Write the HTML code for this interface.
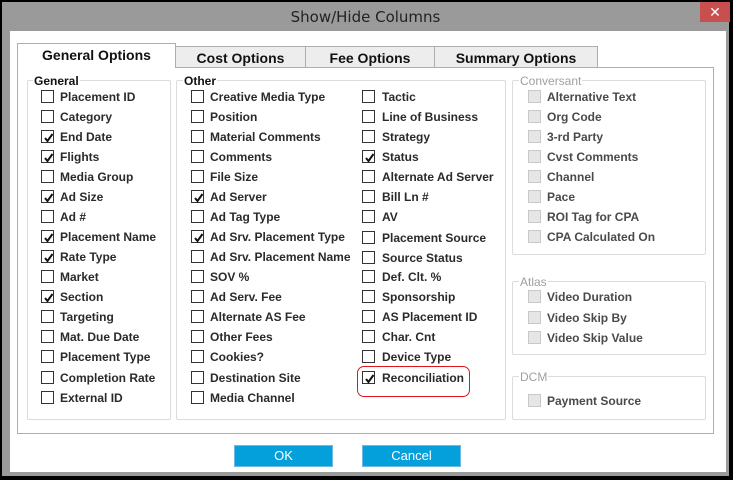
<!DOCTYPE html>
<html><head><meta charset="utf-8"><style>
*{margin:0;padding:0;box-sizing:border-box}
body{width:733px;height:480px;overflow:hidden;background:#000;font-family:"Liberation Sans",Arial,sans-serif;position:relative}
#win{position:absolute;left:2px;top:2px;width:727px;height:474px;background:#9a9a9a}
#title{position:absolute;left:0;top:0;width:727px;height:30px;text-align:center;font-size:15px;line-height:30px;color:#222;font-family:"DejaVu Sans","Liberation Sans",sans-serif}
#close{position:absolute;left:698px;top:0;width:30px;height:20px;background:#c7504f;color:#fff;text-align:center;font-size:14px;line-height:20px}
#client{position:absolute;left:8px;top:31px;width:716px;height:441px;background:#fff}
.abs{position:absolute}
.tab{position:absolute;background:#ededed;border:1px solid #adadad;border-bottom:none;font-weight:bold;font-size:14px;text-align:center;color:#111}
#panel{position:absolute;left:17px;top:67px;width:697px;height:367px;border:1px solid #adadad;background:#fff}
.grp{position:absolute;border:1px solid #dcdcdc;border-radius:2px}
.gt{position:absolute;background:#fff;font-weight:bold;font-size:12px;padding:0 1px;color:#111;line-height:14px}
.gt.d{color:#a0a0a0;font-weight:normal}
.cb{position:absolute;width:13px;height:13px;border:1px solid #333;background:#fff}
.cb.d{border-color:#c8c8c8;background:#e6e6e6}
.lb{position:absolute;font-weight:bold;font-size:12px;color:#2a2a2a;white-space:nowrap;line-height:14px}
.lb.d{color:#4a4a4a}
.btn{position:absolute;top:445px;width:99px;height:22px;background:#03a0dc;border:1px solid #6fb9e0;color:#fff;font-size:13px;text-align:center;line-height:20px}
svg.ck{position:absolute;left:1px;top:1px}
</style></head><body>
<div id="win">
<div id="title">Show/Hide Columns</div>
<div id="close">✕</div>
</div>
<div id="client" style="left:10px"></div>
<div class="abs" style="left:0;top:0;width:733px;height:480px">
<div class="tab" style="left:175px;top:46px;width:131px;height:22px;line-height:22px">Cost Options</div>
<div class="tab" style="left:305px;top:46px;width:130px;height:22px;line-height:22px">Fee Options</div>
<div class="tab" style="left:434px;top:46px;width:164px;height:22px;line-height:22px">Summary Options</div>
<div id="panel"></div>
<div class="tab" style="left:17px;top:43px;width:159px;height:25px;line-height:22px;background:#fff;z-index:2">General Options</div>

<div class="grp" style="left:27px;top:80px;width:144px;height:340px"></div>
<div class="gt" style="left:33px;top:74px">General</div>
<div class="grp" style="left:176px;top:80px;width:330px;height:340px"></div>
<div class="gt" style="left:183px;top:74px">Other</div>
<div class="grp" style="left:512px;top:80px;width:194px;height:175px"></div>
<div class="gt d" style="left:519px;top:74px">Conversant</div>
<div class="grp" style="left:512px;top:281px;width:194px;height:74px"></div>
<div class="gt d" style="left:519px;top:275px">Atlas</div>
<div class="grp" style="left:512px;top:376px;width:194px;height:44px"></div>
<div class="gt d" style="left:519px;top:370px">DCM</div>

<div class="abs" style="left:357px;top:366px;width:113px;height:31px;border:1.5px solid #e0161e;border-radius:7px"></div>

<div class="btn" style="left:234px">OK</div>
<div class="btn" style="left:362px">Cancel</div>
</div>

<svg width="0" height="0" style="position:absolute"><defs><path id="ck" d="M2 6 L4.5 9 L9.5 2" fill="none" stroke="#111" stroke-width="2"/></defs></svg>

<!-- General column -->
<div class="cb" style="left:41px;top:90px"></div><div class="lb" style="left:60px;top:90px">Placement ID</div>
<div class="cb" style="left:41px;top:110px"></div><div class="lb" style="left:60px;top:110px">Category</div>
<div class="cb" style="left:41px;top:130px"><svg class="ck" width="11" height="11"><use href="#ck"/></svg></div><div class="lb" style="left:60px;top:130px">End Date</div>
<div class="cb" style="left:41px;top:150px"><svg class="ck" width="11" height="11"><use href="#ck"/></svg></div><div class="lb" style="left:60px;top:150px">Flights</div>
<div class="cb" style="left:41px;top:170px"></div><div class="lb" style="left:60px;top:170px">Media Group</div>
<div class="cb" style="left:41px;top:190px"><svg class="ck" width="11" height="11"><use href="#ck"/></svg></div><div class="lb" style="left:60px;top:190px">Ad Size</div>
<div class="cb" style="left:41px;top:210px"></div><div class="lb" style="left:60px;top:210px">Ad #</div>
<div class="cb" style="left:41px;top:230px"><svg class="ck" width="11" height="11"><use href="#ck"/></svg></div><div class="lb" style="left:60px;top:230px">Placement Name</div>
<div class="cb" style="left:41px;top:250px"><svg class="ck" width="11" height="11"><use href="#ck"/></svg></div><div class="lb" style="left:60px;top:250px">Rate Type</div>
<div class="cb" style="left:41px;top:270px"></div><div class="lb" style="left:60px;top:270px">Market</div>
<div class="cb" style="left:41px;top:290px"><svg class="ck" width="11" height="11"><use href="#ck"/></svg></div><div class="lb" style="left:60px;top:290px">Section</div>
<div class="cb" style="left:41px;top:310px"></div><div class="lb" style="left:60px;top:310px">Targeting</div>
<div class="cb" style="left:41px;top:330px"></div><div class="lb" style="left:60px;top:330px">Mat. Due Date</div>
<div class="cb" style="left:41px;top:350px"></div><div class="lb" style="left:60px;top:350px">Placement Type</div>
<div class="cb" style="left:41px;top:371px"></div><div class="lb" style="left:60px;top:371px">Completion Rate</div>
<div class="cb" style="left:41px;top:391px"></div><div class="lb" style="left:60px;top:391px">External ID</div>

<!-- Other col 1 -->
<div class="cb" style="left:191px;top:90px"></div><div class="lb" style="left:210px;top:90px">Creative Media Type</div>
<div class="cb" style="left:191px;top:110px"></div><div class="lb" style="left:210px;top:110px">Position</div>
<div class="cb" style="left:191px;top:130px"></div><div class="lb" style="left:210px;top:130px">Material Comments</div>
<div class="cb" style="left:191px;top:150px"></div><div class="lb" style="left:210px;top:150px">Comments</div>
<div class="cb" style="left:191px;top:170px"></div><div class="lb" style="left:210px;top:170px">File Size</div>
<div class="cb" style="left:191px;top:190px"><svg class="ck" width="11" height="11"><use href="#ck"/></svg></div><div class="lb" style="left:210px;top:190px">Ad Server</div>
<div class="cb" style="left:191px;top:210px"></div><div class="lb" style="left:210px;top:210px">Ad Tag Type</div>
<div class="cb" style="left:191px;top:230px"><svg class="ck" width="11" height="11"><use href="#ck"/></svg></div><div class="lb" style="left:210px;top:230px">Ad Srv. Placement Type</div>
<div class="cb" style="left:191px;top:250px"></div><div class="lb" style="left:210px;top:250px">Ad Srv. Placement Name</div>
<div class="cb" style="left:191px;top:270px"></div><div class="lb" style="left:210px;top:270px">SOV %</div>
<div class="cb" style="left:191px;top:290px"></div><div class="lb" style="left:210px;top:290px">Ad Serv. Fee</div>
<div class="cb" style="left:191px;top:310px"></div><div class="lb" style="left:210px;top:310px">Alternate AS Fee</div>
<div class="cb" style="left:191px;top:330px"></div><div class="lb" style="left:210px;top:330px">Other Fees</div>
<div class="cb" style="left:191px;top:350px"></div><div class="lb" style="left:210px;top:350px">Cookies?</div>
<div class="cb" style="left:191px;top:371px"></div><div class="lb" style="left:210px;top:371px">Destination Site</div>
<div class="cb" style="left:191px;top:391px"></div><div class="lb" style="left:210px;top:391px">Media Channel</div>

<!-- Other col 2 -->
<div class="cb" style="left:362px;top:90px"></div><div class="lb" style="left:382px;top:90px">Tactic</div>
<div class="cb" style="left:362px;top:110px"></div><div class="lb" style="left:382px;top:110px">Line of Business</div>
<div class="cb" style="left:362px;top:130px"></div><div class="lb" style="left:382px;top:130px">Strategy</div>
<div class="cb" style="left:362px;top:150px"><svg class="ck" width="11" height="11"><use href="#ck"/></svg></div><div class="lb" style="left:382px;top:150px">Status</div>
<div class="cb" style="left:362px;top:170px"></div><div class="lb" style="left:382px;top:170px">Alternate Ad Server</div>
<div class="cb" style="left:362px;top:190px"></div><div class="lb" style="left:382px;top:190px">Bill Ln #</div>
<div class="cb" style="left:362px;top:210px"></div><div class="lb" style="left:382px;top:210px">AV</div>
<div class="cb" style="left:362px;top:231px"></div><div class="lb" style="left:382px;top:231px">Placement Source</div>
<div class="cb" style="left:362px;top:251px"></div><div class="lb" style="left:382px;top:251px">Source Status</div>
<div class="cb" style="left:362px;top:270px"></div><div class="lb" style="left:382px;top:270px">Def. Clt. %</div>
<div class="cb" style="left:362px;top:290px"></div><div class="lb" style="left:382px;top:290px">Sponsorship</div>
<div class="cb" style="left:362px;top:310px"></div><div class="lb" style="left:382px;top:310px">AS Placement ID</div>
<div class="cb" style="left:362px;top:330px"></div><div class="lb" style="left:382px;top:330px">Char. Cnt</div>
<div class="cb" style="left:362px;top:350px"></div><div class="lb" style="left:382px;top:350px">Device Type</div>
<div class="cb" style="left:362px;top:371px"><svg class="ck" width="11" height="11"><use href="#ck"/></svg></div><div class="lb" style="left:382px;top:371px">Reconciliation</div>

<!-- Conversant -->
<div class="cb d" style="left:528px;top:90px"></div><div class="lb d" style="left:547px;top:90px">Alternative Text</div>
<div class="cb d" style="left:528px;top:110px"></div><div class="lb d" style="left:547px;top:110px">Org Code</div>
<div class="cb d" style="left:528px;top:130px"></div><div class="lb d" style="left:547px;top:130px">3-rd Party</div>
<div class="cb d" style="left:528px;top:150px"></div><div class="lb d" style="left:547px;top:150px">Cvst Comments</div>
<div class="cb d" style="left:528px;top:170px"></div><div class="lb d" style="left:547px;top:170px">Channel</div>
<div class="cb d" style="left:528px;top:190px"></div><div class="lb d" style="left:547px;top:190px">Pace</div>
<div class="cb d" style="left:528px;top:210px"></div><div class="lb d" style="left:547px;top:210px">ROI Tag for CPA</div>
<div class="cb d" style="left:528px;top:230px"></div><div class="lb d" style="left:547px;top:230px">CPA Calculated On</div>
<!-- Atlas -->
<div class="cb d" style="left:528px;top:290px"></div><div class="lb d" style="left:547px;top:290px">Video Duration</div>
<div class="cb d" style="left:528px;top:311px"></div><div class="lb d" style="left:547px;top:311px">Video Skip By</div>
<div class="cb d" style="left:528px;top:331px"></div><div class="lb d" style="left:547px;top:331px">Video Skip Value</div>
<!-- DCM -->
<div class="cb d" style="left:528px;top:394px"></div><div class="lb d" style="left:547px;top:394px">Payment Source</div>
</body></html>
